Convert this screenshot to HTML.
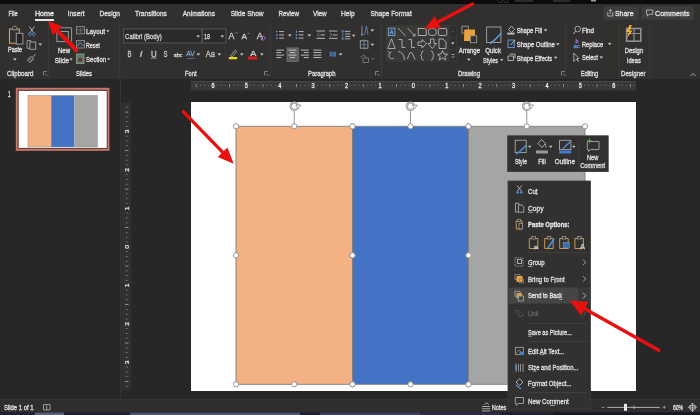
<!DOCTYPE html><html><head><meta charset="utf-8"><style>html,body{margin:0;padding:0;width:700px;height:415px;overflow:hidden;background:#262626}svg{display:block;will-change:transform}</style></head><body>
<svg width="700" height="415" viewBox="0 0 700 415" font-family="'Liberation Sans', sans-serif">
<rect x="0" y="0" width="700" height="415" fill="#272727" />
<rect x="0" y="0" width="700" height="79" fill="#31302e" />
<rect x="0" y="0" width="700" height="4" fill="#0b0b0b" />
<circle cx="500" cy="0.5" r="2.2" fill="none" stroke="#3a3a3a" stroke-width="0.8"/>
<circle cx="506" cy="0.5" r="2.2" fill="none" stroke="#3a3a3a" stroke-width="0.8"/>
<rect x="515" y="0" width="18" height="2" fill="#2a2a2a" />
<rect x="553" y="0" width="17" height="2" fill="#2a2a2a" />
<rect x="591" y="0" width="5" height="1.5" fill="#9a9a9a" />
<text x="8.60" y="16.00" font-size="7.97" fill="#e0e0e0" stroke="#e0e0e0" stroke-width="0.3" textLength="9.10" lengthAdjust="spacingAndGlyphs">File</text>
<text x="34.90" y="16.00" font-size="7.97" fill="#f0f0f0" stroke="#f0f0f0" stroke-width="0.3" textLength="19.00" lengthAdjust="spacingAndGlyphs">Home</text>
<text x="67.80" y="16.00" font-size="7.97" fill="#e0e0e0" stroke="#e0e0e0" stroke-width="0.3" textLength="16.70" lengthAdjust="spacingAndGlyphs">Insert</text>
<text x="99.40" y="16.00" font-size="7.97" fill="#e0e0e0" stroke="#e0e0e0" stroke-width="0.3" textLength="20.60" lengthAdjust="spacingAndGlyphs">Design</text>
<text x="134.90" y="16.00" font-size="7.97" fill="#e0e0e0" stroke="#e0e0e0" stroke-width="0.3" textLength="32.00" lengthAdjust="spacingAndGlyphs">Transitions</text>
<text x="182.70" y="16.00" font-size="7.97" fill="#e0e0e0" stroke="#e0e0e0" stroke-width="0.3" textLength="32.30" lengthAdjust="spacingAndGlyphs">Animations</text>
<text x="230.70" y="16.00" font-size="7.97" fill="#e0e0e0" stroke="#e0e0e0" stroke-width="0.3" textLength="32.90" lengthAdjust="spacingAndGlyphs">Slide Show</text>
<text x="278.40" y="16.00" font-size="7.97" fill="#e0e0e0" stroke="#e0e0e0" stroke-width="0.3" textLength="20.60" lengthAdjust="spacingAndGlyphs">Review</text>
<text x="313.00" y="16.00" font-size="7.97" fill="#e0e0e0" stroke="#e0e0e0" stroke-width="0.3" textLength="13.70" lengthAdjust="spacingAndGlyphs">View</text>
<text x="341.00" y="16.00" font-size="7.97" fill="#e0e0e0" stroke="#e0e0e0" stroke-width="0.3" textLength="13.80" lengthAdjust="spacingAndGlyphs">Help</text>
<text x="370.60" y="16.00" font-size="7.97" fill="#e0e0e0" stroke="#e0e0e0" stroke-width="0.3" textLength="41.10" lengthAdjust="spacingAndGlyphs">Shape Format</text>
<rect x="35" y="19" width="19" height="2" fill="#e6e6e6" />
<rect x="603.5" y="6.2" width="35.5" height="13.6" fill="#3e3d3b" rx="1"/>
<rect x="641.3" y="6.2" width="52.8" height="13.6" fill="#3e3d3b" rx="1"/>
<text x="615.00" y="16.00" font-size="7.97" fill="#e6e6e6" stroke="#e6e6e6" stroke-width="0.3" textLength="18.50" lengthAdjust="spacingAndGlyphs">Share</text>
<text x="655.00" y="16.00" font-size="7.97" fill="#e6e6e6" stroke="#e6e6e6" stroke-width="0.3" textLength="34.50" lengthAdjust="spacingAndGlyphs">Comments</text>
<rect x="48.3" y="24.3" width="0.9" height="52.7" fill="#3d3d3b" />
<rect x="119.2" y="24.3" width="0.9" height="52.7" fill="#3d3d3b" />
<rect x="269.8" y="24.3" width="0.9" height="52.7" fill="#3d3d3b" />
<rect x="381" y="24.3" width="0.9" height="52.7" fill="#3d3d3b" />
<rect x="565.5" y="24.3" width="0.9" height="52.7" fill="#3d3d3b" />
<rect x="618.8" y="24.3" width="0.9" height="52.7" fill="#3d3d3b" />
<rect x="649.2" y="24.3" width="0.9" height="52.7" fill="#3d3d3b" />
<text x="7.00" y="76.30" font-size="7.54" fill="#e0e0e0" stroke="#e0e0e0" stroke-width="0.3" textLength="26.50" lengthAdjust="spacingAndGlyphs">Clipboard</text>
<text x="76.00" y="76.30" font-size="7.54" fill="#e0e0e0" stroke="#e0e0e0" stroke-width="0.3" textLength="16.00" lengthAdjust="spacingAndGlyphs">Slides</text>
<text x="185.00" y="76.30" font-size="7.54" fill="#e0e0e0" stroke="#e0e0e0" stroke-width="0.3" textLength="11.50" lengthAdjust="spacingAndGlyphs">Font</text>
<text x="308.00" y="76.30" font-size="7.54" fill="#e0e0e0" stroke="#e0e0e0" stroke-width="0.3" textLength="27.50" lengthAdjust="spacingAndGlyphs">Paragraph</text>
<text x="458.00" y="76.30" font-size="7.54" fill="#e0e0e0" stroke="#e0e0e0" stroke-width="0.3" textLength="22.00" lengthAdjust="spacingAndGlyphs">Drawing</text>
<text x="581.00" y="76.30" font-size="7.54" fill="#e0e0e0" stroke="#e0e0e0" stroke-width="0.3" textLength="17.00" lengthAdjust="spacingAndGlyphs">Editing</text>
<text x="621.00" y="76.30" font-size="7.54" fill="#e0e0e0" stroke="#e0e0e0" stroke-width="0.3" textLength="24.50" lengthAdjust="spacingAndGlyphs">Designer</text>
<path d="M12.5,29 H9.5 V43.2 H16 M17.2,29 H19.3 V33" fill="none" stroke="#d6a45a" stroke-width="1.1" />
<path d="M12.6,29.8 V27.6 L14.85,25.8 L17.1,27.6 V29.8 Z" fill="#31302e" stroke="#a0a0a0" stroke-width="0.9" />
<rect x="16.3" y="33.3" width="6.6" height="10.8" fill="#262524" stroke="#9a9a9a" stroke-width="1"/>
<text x="8.00" y="52.30" font-size="6.96" fill="#e0e0e0" stroke="#e0e0e0" stroke-width="0.3" textLength="14.20" lengthAdjust="spacingAndGlyphs">Paste</text>
<path d="M13.60,58.70 L14.90,60.30 L16.20,58.70 Z" fill="#bdbdbd" stroke="#bdbdbd" stroke-width="0.7"/>
<path d="M29.3,26.5 L33.8,33 M34.3,26.5 L29.8,33" fill="none" stroke="#b4b4b4" stroke-width="0.9" />
<circle cx="29.8" cy="34.3" r="1.5" fill="none" stroke="#5b86b8" stroke-width="0.9"/>
<circle cx="33.8" cy="34.3" r="1.5" fill="none" stroke="#5b86b8" stroke-width="0.9"/>
<path d="M27,40.5 H30.8 V48.3 H27 Z" fill="none" stroke="#9a9a9a" stroke-width="0.9" />
<rect x="29.9" y="42" width="5.8" height="7.3" fill="#31302e" stroke="#a8a8a8" stroke-width="0.9"/>
<path d="M39.00,43.70 L40.30,45.30 L41.60,43.70 Z" fill="#bdbdbd" stroke="#bdbdbd" stroke-width="0.7"/>
<path d="M27.5,60 L31,56.5 L33.5,59 L30,62.5 Z M29.2,58.3 L31.7,60.8 M32.2,57.7 L35.5,54.2" fill="none" stroke="#a8a8a8" stroke-width="1" />
<path d="M60,27.8 H71.6 V41.6" fill="none" stroke="#9a9a9a" stroke-width="1" />
<rect x="56.9" y="31.5" width="11.4" height="10.1" fill="#31302e" stroke="#9a9a9a" stroke-width="1"/>
<text x="58.00" y="53.00" font-size="6.67" fill="#e0e0e0" stroke="#e0e0e0" stroke-width="0.3" textLength="12.00" lengthAdjust="spacingAndGlyphs">New</text>
<text x="54.80" y="62.80" font-size="7.68" fill="#e0e0e0" stroke="#e0e0e0" stroke-width="0.3" textLength="14.20" lengthAdjust="spacingAndGlyphs">Slide</text>
<path d="M70.00,58.70 L71.10,60.30 L72.20,58.70 Z" fill="#bdbdbd" stroke="#bdbdbd" stroke-width="0.7"/>
<rect x="76.5" y="26.6" width="8" height="7.2" fill="#3a3a3a" stroke="#8a8a8a" stroke-width="0.9"/>
<path d="M80.5,28 V33.5 M77,30 H84" fill="none" stroke="#6a6a6a" stroke-width="0.8" />
<text x="86.00" y="33.70" font-size="6.96" fill="#e0e0e0" stroke="#e0e0e0" stroke-width="0.3" textLength="19.10" lengthAdjust="spacingAndGlyphs">Layout</text>
<path d="M106.80,30.50 L107.90,32.10 L109.00,30.50 Z" fill="#bdbdbd" stroke="#bdbdbd" stroke-width="0.7"/>
<rect x="76.5" y="40.5" width="8" height="7.5" fill="#3a3a3a" stroke="#8a8a8a" stroke-width="0.9"/>
<path d="M77.5,46 L80,42.5 L83.5,46" fill="none" stroke="#5d8fc9" stroke-width="1" />
<text x="86.00" y="47.70" font-size="7.25" fill="#e0e0e0" stroke="#e0e0e0" stroke-width="0.3" textLength="13.80" lengthAdjust="spacingAndGlyphs">Reset</text>
<rect x="76.5" y="54" width="7.5" height="9.5" fill="#5f7a6a" stroke="#8a9a8a" stroke-width="0.9"/>
<rect x="78.5" y="58" width="3.5" height="3.5" fill="#7a2a2a" />
<text x="86.00" y="61.80" font-size="7.54" fill="#e0e0e0" stroke="#e0e0e0" stroke-width="0.3" textLength="20.20" lengthAdjust="spacingAndGlyphs">Section</text>
<path d="M107.50,58.50 L108.60,60.10 L109.70,58.50 Z" fill="#bdbdbd" stroke="#bdbdbd" stroke-width="0.7"/>
<rect x="123.4" y="28.9" width="78.6" height="14" fill="#2b2a28" stroke="#5a5a5a" stroke-width="0.9"/>
<rect x="202.5" y="28.9" width="23.4" height="14" fill="#2b2a28" stroke="#5a5a5a" stroke-width="0.9"/>
<text x="125.10" y="38.60" font-size="8.12" fill="#d8d8d8" stroke="#d8d8d8" stroke-width="0.3" textLength="36.60" lengthAdjust="spacingAndGlyphs">Calibri (Body)</text>
<path d="M196.80,35.70 L198.10,37.30 L199.40,35.70 Z" fill="#bdbdbd" stroke="#bdbdbd" stroke-width="0.7"/>
<text x="204.10" y="38.50" font-size="7.97" fill="#d8d8d8" stroke="#d8d8d8" stroke-width="0.3" textLength="6.00" lengthAdjust="spacingAndGlyphs">18</text>
<path d="M221.00,35.70 L222.30,37.30 L223.60,35.70 Z" fill="#bdbdbd" stroke="#bdbdbd" stroke-width="0.7"/>
<text x="228.60" y="38.50" font-size="8.70" fill="#c8c8c8" stroke="#c8c8c8" stroke-width="0.3" textLength="5.90" lengthAdjust="spacingAndGlyphs">A</text>
<path d="M235,33.5 L236.3,32.2 L237.6,33.5" fill="none" stroke="#aaa" stroke-width="0.7" />
<text x="241.60" y="38.50" font-size="6.96" fill="#c8c8c8" stroke="#c8c8c8" stroke-width="0.3" textLength="5.40" lengthAdjust="spacingAndGlyphs">A</text>
<path d="M247.6,33 L248.6,34 L249.6,33" fill="none" stroke="#aaa" stroke-width="0.7" />
<rect x="252.5" y="30" width="0.7" height="12" fill="#3a3a3a" />
<text x="256.80" y="39.00" font-size="9.42" fill="#c8c8c8" stroke="#c8c8c8" stroke-width="0.3" textLength="6.20" lengthAdjust="spacingAndGlyphs">A</text>
<path d="M260.5,38.5 L263,35.8 L265.5,38 L263,40.6 Z" fill="none" stroke="#a36ad0" stroke-width="1" />
<text x="127.40" y="56.60" font-size="8.41" fill="#c8c8c8" stroke="#c8c8c8" stroke-width="0.3" textLength="4.00" lengthAdjust="spacingAndGlyphs">B</text>
<text x="139.6" y="56.6" font-size="8.4" font-style="italic" fill="#c8c8c8" stroke="#c8c8c8" stroke-width="0.2" textLength="3" lengthAdjust="spacingAndGlyphs">I</text>
<text x="150.90" y="56.60" font-size="8.41" fill="#c8c8c8" stroke="#c8c8c8" stroke-width="0.3" textLength="5.70" lengthAdjust="spacingAndGlyphs">U</text>
<rect x="150.9" y="57.6" width="5.7" height="0.8" fill="#c0c0c0" />
<text x="163.40" y="56.60" font-size="8.41" fill="#c8c8c8" stroke="#c8c8c8" stroke-width="0.3" textLength="4.00" lengthAdjust="spacingAndGlyphs">S</text>
<text x="173.70" y="56.80" font-size="6.09" fill="#c8c8c8" stroke="#c8c8c8" stroke-width="0.3" textLength="8.60" lengthAdjust="spacingAndGlyphs">abc</text>
<rect x="173.7" y="54.3" width="8.6" height="0.8" fill="#c0c0c0" />
<text x="186.30" y="56.00" font-size="8.12" fill="#7aa2d0" stroke="#7aa2d0" stroke-width="0.3" textLength="8.60" lengthAdjust="spacingAndGlyphs">AV</text>
<path d="M187,58.5 H195" fill="none" stroke="#4a78b0" stroke-width="0.8" />
<path d="M197.00,53.70 L198.30,55.30 L199.60,53.70 Z" fill="#bdbdbd" stroke="#bdbdbd" stroke-width="0.7"/>
<text x="205.80" y="57.00" font-size="8.41" fill="#c8c8c8" stroke="#c8c8c8" stroke-width="0.3" textLength="9.20" lengthAdjust="spacingAndGlyphs">Aa</text>
<path d="M218.00,53.70 L219.30,55.30 L220.60,53.70 Z" fill="#bdbdbd" stroke="#bdbdbd" stroke-width="0.7"/>
<rect x="225.3" y="48" width="0.7" height="12" fill="#3a3a3a" />
<path d="M230.5,55.8 L235.3,50 L236.8,51.4 L232,57 Z" fill="none" stroke="#b0b0b0" stroke-width="0.8" />
<rect x="228.6" y="57" width="8.7" height="2.3" fill="#e6e01a" rx="1"/>
<path d="M240.50,53.70 L241.80,55.30 L243.10,53.70 Z" fill="#bdbdbd" stroke="#bdbdbd" stroke-width="0.7"/>
<text x="250.20" y="55.60" font-size="7.83" fill="#c8c8c8" stroke="#c8c8c8" stroke-width="0.3" textLength="6.10" lengthAdjust="spacingAndGlyphs">A</text>
<rect x="247.6" y="56.4" width="9.7" height="3.2" fill="#d71f22" rx="1.4"/>
<path d="M260.60,53.70 L261.90,55.30 L263.20,53.70 Z" fill="#bdbdbd" stroke="#bdbdbd" stroke-width="0.7"/>
<circle cx="276.9" cy="31.6" r="0.9" fill="#5b8fd0"/>
<rect x="279.09999999999997" y="31.150000000000002" width="5" height="0.9" fill="#c0c0c0" />
<circle cx="276.9" cy="34.9" r="0.9" fill="#5b8fd0"/>
<rect x="279.09999999999997" y="34.449999999999996" width="5" height="0.9" fill="#c0c0c0" />
<circle cx="276.9" cy="38.1" r="0.9" fill="#5b8fd0"/>
<rect x="279.09999999999997" y="37.65" width="5" height="0.9" fill="#c0c0c0" />
<rect x="295.79999999999995" y="30.6" width="1.2" height="2" fill="#5b8fd0" />
<rect x="298.59999999999997" y="31.150000000000002" width="5" height="0.9" fill="#c0c0c0" />
<rect x="295.79999999999995" y="33.9" width="1.2" height="2" fill="#5b8fd0" />
<rect x="298.59999999999997" y="34.449999999999996" width="5" height="0.9" fill="#c0c0c0" />
<rect x="295.79999999999995" y="37.1" width="1.2" height="2" fill="#5b8fd0" />
<rect x="298.59999999999997" y="37.65" width="5" height="0.9" fill="#c0c0c0" />
<path d="M288.50,34.70 L289.80,36.30 L291.10,34.70 Z" fill="#bdbdbd" stroke="#bdbdbd" stroke-width="0.7"/>
<path d="M308.00,34.70 L309.30,36.30 L310.60,34.70 Z" fill="#bdbdbd" stroke="#bdbdbd" stroke-width="0.7"/>
<rect x="316.5" y="30.55" width="8.5" height="0.9" fill="#c0c0c0" />
<rect x="316.5" y="37.849999999999994" width="8.5" height="0.9" fill="#c0c0c0" />
<rect x="320.5" y="34.5" width="4.5" height="0.9" fill="#c0c0c0" />
<path d="M319.3,33.2 L317.5,34.9 L319.3,36.6" fill="none" stroke="#a0a0a0" stroke-width="0.8" />
<rect x="329" y="30.55" width="8.5" height="0.9" fill="#c0c0c0" />
<rect x="329" y="37.849999999999994" width="8.5" height="0.9" fill="#c0c0c0" />
<rect x="333" y="34.5" width="4.5" height="0.9" fill="#c0c0c0" />
<path d="M330,33.2 L331.8,34.9 L330,36.6" fill="none" stroke="#a0a0a0" stroke-width="0.8" />
<path d="M342.8,30.5 V39.5 M341.3,32 L342.8,30.3 L344.3,32 M341.3,38 L342.8,39.7 L344.3,38" fill="none" stroke="#5b8fd0" stroke-width="0.8" />
<rect x="345" y="30.85" width="5.3" height="0.9" fill="#c0c0c0" />
<rect x="345" y="33.55" width="5.3" height="0.9" fill="#c0c0c0" />
<rect x="345" y="36.05" width="5.3" height="0.9" fill="#c0c0c0" />
<rect x="345" y="38.349999999999994" width="5.3" height="0.9" fill="#c0c0c0" />
<path d="M352.40,35.00 L353.70,36.60 L355.00,35.00 Z" fill="#bdbdbd" stroke="#bdbdbd" stroke-width="0.7"/>
<rect x="287" y="47.9" width="11.3" height="13.6" fill="#5c5c5c" stroke="#7a7a7a" stroke-width="0.7"/>
<rect x="276.3" y="49.65" width="7.7" height="0.9" fill="#c8c8c8" />
<rect x="276.3" y="52.15" width="5" height="0.9" fill="#c8c8c8" />
<rect x="276.3" y="54.65" width="7.7" height="0.9" fill="#c8c8c8" />
<rect x="276.3" y="57.15" width="5" height="0.9" fill="#c8c8c8" />
<rect x="288.5" y="49.65" width="8" height="0.9" fill="#c8c8c8" />
<rect x="290.0" y="52.15" width="5" height="0.9" fill="#c8c8c8" />
<rect x="288.5" y="54.65" width="8" height="0.9" fill="#c8c8c8" />
<rect x="290.0" y="57.15" width="5" height="0.9" fill="#c8c8c8" />
<rect x="300.8" y="49.65" width="8" height="0.9" fill="#c8c8c8" />
<rect x="303.8" y="52.15" width="5" height="0.9" fill="#c8c8c8" />
<rect x="300.8" y="54.65" width="8" height="0.9" fill="#c8c8c8" />
<rect x="303.8" y="57.15" width="5" height="0.9" fill="#c8c8c8" />
<rect x="313.3" y="49.65" width="8" height="0.9" fill="#c8c8c8" />
<rect x="313.3" y="52.15" width="8" height="0.9" fill="#c8c8c8" />
<rect x="313.3" y="54.65" width="8" height="0.9" fill="#c8c8c8" />
<rect x="313.3" y="57.15" width="8" height="0.9" fill="#c8c8c8" />
<rect x="325.2" y="48" width="0.7" height="12" fill="#3a3a3a" />
<rect x="329.5" y="51.7" width="3" height="4.9" fill="#3f6ea8" />
<rect x="333" y="51.7" width="3" height="4.9" fill="#3f6ea8" />
<path d="M339.30,53.70 L340.60,55.30 L341.90,53.70 Z" fill="#bdbdbd" stroke="#bdbdbd" stroke-width="0.7"/>
<path d="M362,25.7 V35.2 M360.8,34 L362,35.4 L363.2,34" fill="none" stroke="#9aa6b2" stroke-width="0.8" />
<path d="M364.5,35 L366.5,26 L368,35" fill="none" stroke="#5b8fd0" stroke-width="0.8" />
<path d="M371.00,29.70 L372.30,31.30 L373.60,29.70 Z" fill="#bdbdbd" stroke="#bdbdbd" stroke-width="0.7"/>
<rect x="360.3" y="40.8" width="7.6" height="7.4" fill="none" stroke="#9aa6b2" stroke-width="0.9"/>
<path d="M364.1,39.5 V49.5 M362,44.5 H366.2" fill="none" stroke="#6a8fb8" stroke-width="0.8" />
<path d="M371.00,44.00 L372.30,45.60 L373.60,44.00 Z" fill="#bdbdbd" stroke="#bdbdbd" stroke-width="0.7"/>
<path d="M360.5,57 L364,55 L366,57 M363,58 H368.5 V62.5 H363 Z" fill="none" stroke="#7a7a7a" stroke-width="0.9" />
<path d="M371.50,58.30 L372.80,59.90 L374.10,58.30 Z" fill="#5a5a5a" stroke="#5a5a5a" stroke-width="0.7"/>
<path d="M43.5,71.5 H47.0 M43.5,71.5 V75.5 M45.0,73.5 L47.5,76" fill="none" stroke="#a0a0a0" stroke-width="0.7" />
<path d="M264.5,71.5 H268.0 M264.5,71.5 V75.5 M266.0,73.5 L268.5,76" fill="none" stroke="#a0a0a0" stroke-width="0.7" />
<path d="M375.5,71.5 H379.0 M375.5,71.5 V75.5 M377.0,73.5 L379.5,76" fill="none" stroke="#a0a0a0" stroke-width="0.7" />
<path d="M561.5,71.5 H565.0 M561.5,71.5 V75.5 M563.0,73.5 L565.5,76" fill="none" stroke="#a0a0a0" stroke-width="0.7" />
<rect x="385.9" y="25.3" width="63" height="36.3" fill="#3a3937" />
<rect x="449.2" y="25.3" width="7.5" height="11.8" fill="#2f2f2f" stroke="#3f3f3f" stroke-width="0.6"/>
<rect x="449.2" y="37.3" width="7.5" height="11.8" fill="#2f2f2f" stroke="#3f3f3f" stroke-width="0.6"/>
<rect x="449.2" y="49.3" width="7.5" height="12.2" fill="#2f2f2f" stroke="#3f3f3f" stroke-width="0.6"/>
<rect x="452" y="31" width="1.5" height="0.8" fill="#6a6a6a" />
<path d="M451.60,42.70 L452.80,44.30 L454.00,42.70 Z" fill="#bdbdbd" stroke="#bdbdbd" stroke-width="0.7"/>
<path d="M451.5,54.5 H454.5 M451.5,56.3 L453,57.8 L454.5,56.3" fill="none" stroke="#bbb" stroke-width="0.8" />
<rect x="388.3" y="28.2" width="6.6" height="7.4" fill="#34404c" stroke="#7aa6d6" stroke-width="0.9"/>
<text x="389.80" y="34.20" font-size="5.22" fill="#7aa6d6" stroke="#7aa6d6" stroke-width="0.3" textLength="3.60" lengthAdjust="spacingAndGlyphs">A</text>
<path d="M398,28 L405.5,36" fill="none" stroke="#b4b4b4" stroke-width="0.9" />
<path d="M407.5,28 L415,36 M415,33.5 V36 H412.5" fill="none" stroke="#b4b4b4" stroke-width="0.9" />
<rect x="418.2" y="28.5" width="8" height="7" fill="none" stroke="#b4b4b4" stroke-width="0.9"/>
<rect x="428.3" y="28.5" width="8" height="7" fill="none" stroke="#b4b4b4" stroke-width="0.9" rx="3"/>
<rect x="438.3" y="28.5" width="8.5" height="7" fill="none" stroke="#b4b4b4" stroke-width="0.9" rx="1.5"/>
<path d="M391.5,38.8 L387.8,48.5 H395.2 Z" fill="none" stroke="#b4b4b4" stroke-width="0.9" />
<path d="M398.5,39.5 H402 V47.5 H405.5" fill="none" stroke="#b4b4b4" stroke-width="0.9" />
<path d="M408.5,39.5 H411.5 V47.5 H415" fill="none" stroke="#b4b4b4" stroke-width="0.9" />
<path d="M418,42 H422 V39.5 L426.5,43.7 L422,48 V45.5 H418 Z" fill="none" stroke="#b4b4b4" stroke-width="0.9" />
<path d="M430.5,39 H434 V43.5 H436.5 L432.3,48.5 L428,43.5 H430.5 Z" fill="none" stroke="#b4b4b4" stroke-width="0.9" />
<path d="M439,39 H443 L446,42 V48.5 H439 Z" fill="none" stroke="#b4b4b4" stroke-width="0.9" />
<path d="M388,51 C390,55 393,50 390,53 C387,57 391,60 394,58" fill="none" stroke="#b4b4b4" stroke-width="0.9" />
<path d="M398,51.5 Q404,52 404.5,60" fill="none" stroke="#b4b4b4" stroke-width="0.9" />
<path d="M407.5,59 Q410,50 412,53 Q413.5,56 415,59.5" fill="none" stroke="#b4b4b4" stroke-width="0.9" />
<path d="M423.5,51 Q421.5,51 421.5,53.5 V54.7 L420.5,55.5 L421.5,56.3 V58 Q421.5,60 423.5,60" fill="none" stroke="#b4b4b4" stroke-width="0.9" />
<path d="M431,51 Q433,51 433,53.5 V54.7 L434,55.5 L433,56.3 V58 Q433,60 431,60" fill="none" stroke="#b4b4b4" stroke-width="0.9" />
<path d="M442.5,50.5 L444,54 L447.5,54.3 L444.8,56.6 L445.8,60 L442.5,58 L439.2,60 L440.2,56.6 L437.5,54.3 L441,54 Z" fill="none" stroke="#b4b4b4" stroke-width="0.9" />
<rect x="461.9" y="26.2" width="6.4" height="6.9" fill="none" stroke="#9a9a9a" stroke-width="0.9"/>
<path d="M464.3,29.5 H475 V36 H470.4 V41.1 H464 Z" fill="#eba23a" stroke="none" stroke-width="0.9" />
<rect x="470.4" y="35.8" width="6.3" height="6.9" fill="#31302e" stroke="#9a9a9a" stroke-width="0.9"/>
<text x="458.70" y="53.30" font-size="6.96" fill="#e0e0e0" stroke="#e0e0e0" stroke-width="0.3" textLength="21.30" lengthAdjust="spacingAndGlyphs">Arrange</text>
<path d="M467.50,58.90 L468.80,60.50 L470.10,58.90 Z" fill="#bdbdbd" stroke="#bdbdbd" stroke-width="0.7"/>
<rect x="486.6" y="27" width="14.3" height="15.5" fill="none" stroke="#9a9a9a" stroke-width="1"/>
<path d="M501.5,33 L492.5,42" fill="none" stroke="#5b9ee0" stroke-width="1.6" />
<path d="M490,43.5 L492.5,41.5" fill="none" stroke="#5b9ee0" stroke-width="2" />
<text x="485.20" y="52.80" font-size="6.96" fill="#e0e0e0" stroke="#e0e0e0" stroke-width="0.3" textLength="15.90" lengthAdjust="spacingAndGlyphs">Quick</text>
<text x="483.10" y="62.80" font-size="7.97" fill="#e0e0e0" stroke="#e0e0e0" stroke-width="0.3" textLength="14.90" lengthAdjust="spacingAndGlyphs">Styles</text>
<path d="M500.60,59.30 L501.70,60.90 L502.80,59.30 Z" fill="#bdbdbd" stroke="#bdbdbd" stroke-width="0.7"/>
<path d="M508.5,29.5 L511.5,26 L514.5,29.5 L511.5,32.5 Z" fill="none" stroke="#b8b8b8" stroke-width="0.9" />
<rect x="507.2" y="32.6" width="7.4" height="2" fill="#b8b8b8" />
<text x="516.70" y="33.10" font-size="7.54" fill="#e0e0e0" stroke="#e0e0e0" stroke-width="0.3" textLength="25.50" lengthAdjust="spacingAndGlyphs">Shape Fill</text>
<path d="M544.30,29.60 L545.60,31.20 L546.90,29.60 Z" fill="#bdbdbd" stroke="#bdbdbd" stroke-width="0.7"/>
<rect x="508" y="40" width="6.2" height="7.5" fill="none" stroke="#5b8fd0" stroke-width="1.1"/>
<path d="M510.5,45 L515,40" fill="none" stroke="#b8b8b8" stroke-width="1" />
<text x="516.70" y="46.90" font-size="7.54" fill="#e0e0e0" stroke="#e0e0e0" stroke-width="0.3" textLength="38.20" lengthAdjust="spacingAndGlyphs">Shape Outline</text>
<path d="M556.50,43.60 L557.80,45.20 L559.10,43.60 Z" fill="#bdbdbd" stroke="#bdbdbd" stroke-width="0.7"/>
<path d="M508,56 H513.5 V60.5 H508 Z M509.5,54 H515 V58.5" fill="none" stroke="#b8b8b8" stroke-width="0.9" />
<text x="516.70" y="60.70" font-size="7.54" fill="#e0e0e0" stroke="#e0e0e0" stroke-width="0.3" textLength="35.50" lengthAdjust="spacingAndGlyphs">Shape Effects</text>
<path d="M554.40,57.00 L555.70,58.60 L557.00,57.00 Z" fill="#bdbdbd" stroke="#bdbdbd" stroke-width="0.7"/>
<circle cx="577.7" cy="29" r="2.8" fill="none" stroke="#b0b0b0" stroke-width="0.9"/>
<path d="M575.7,31 L573.4,34" fill="none" stroke="#b0b0b0" stroke-width="1" />
<text x="581.90" y="33.10" font-size="7.54" fill="#e0e0e0" stroke="#e0e0e0" stroke-width="0.3" textLength="12.20" lengthAdjust="spacingAndGlyphs">Find</text>
<text x="575.50" y="42.50" font-size="6.23" fill="#a87ad0" stroke="#a87ad0" stroke-width="0.3" textLength="3.00" lengthAdjust="spacingAndGlyphs">b</text>
<text x="573.40" y="47.80" font-size="4.78" fill="#5b8fd0" stroke="#5b8fd0" stroke-width="0.3" textLength="6.60" lengthAdjust="spacingAndGlyphs">ac</text>
<text x="581.90" y="46.90" font-size="6.96" fill="#e0e0e0" stroke="#e0e0e0" stroke-width="0.3" textLength="21.20" lengthAdjust="spacingAndGlyphs">Replace</text>
<path d="M608.40,43.30 L609.70,44.90 L611.00,43.30 Z" fill="#bdbdbd" stroke="#bdbdbd" stroke-width="0.7"/>
<path d="M573.8,53 V61.5 L576,59.3 L578.5,61.5 L577,58.5 H579 Z" fill="none" stroke="#b0b0b0" stroke-width="0.9" />
<text x="581.90" y="60.20" font-size="6.96" fill="#e0e0e0" stroke="#e0e0e0" stroke-width="0.3" textLength="15.90" lengthAdjust="spacingAndGlyphs">Select</text>
<path d="M599.90,56.70 L601.20,58.30 L602.50,56.70 Z" fill="#bdbdbd" stroke="#bdbdbd" stroke-width="0.7"/>
<rect x="626.6" y="28.5" width="14.2" height="12.7" fill="none" stroke="#8f8f8f" stroke-width="1.6"/>
<path d="M634,29 V41 M626.6,33.5 H640.8" fill="none" stroke="#8f8f8f" stroke-width="1.2" />
<path d="M629.5,25 L626.2,32 H629 L626.8,38.5 L632.5,30.5 H629.8 L631.8,25 Z" fill="#f0b030" stroke="none" stroke-width="0.9" />
<text x="624.70" y="53.20" font-size="7.25" fill="#e0e0e0" stroke="#e0e0e0" stroke-width="0.3" textLength="18.50" lengthAdjust="spacingAndGlyphs">Design</text>
<text x="626.80" y="62.60" font-size="7.97" fill="#e0e0e0" stroke="#e0e0e0" stroke-width="0.3" textLength="14.10" lengthAdjust="spacingAndGlyphs">Ideas</text>
<path d="M690.5,76 L693,73.5 L695.5,76" fill="none" stroke="#b0b0b0" stroke-width="0.9" />
<path d="M607.8,12 V16 H612.8 V12 M610.3,13.8 V9.5 M608.8,11 L610.3,9.4 L611.8,11" fill="none" stroke="#c8c8c8" stroke-width="0.8" />
<path d="M646.5,10 H652.8 V14.3 H649.3 L647.5,16 V14.3 H646.5 Z" fill="none" stroke="#c8c8c8" stroke-width="0.8" />
<rect x="120" y="79" width="1" height="321" fill="#343434" />
<rect x="191" y="81" width="445" height="9.5" fill="#383838" />
<rect x="121.5" y="102.5" width="9.5" height="288" fill="#303030" />
<rect x="191" y="102" width="445" height="289" fill="#ffffff" />
<text x="8.00" y="96.50" font-size="8.70" fill="#e0e0e0" stroke="#e0e0e0" stroke-width="0.3" textLength="2.50" lengthAdjust="spacingAndGlyphs">1</text>
<rect x="15.8" y="87.8" width="93.6" height="63" fill="#c8786a" />
<rect x="17.6" y="89.7" width="90" height="59.2" fill="#5a3a34" />
<rect x="18.7" y="90.9" width="88" height="57" fill="#ffffff" />
<rect x="28" y="95.4" width="23.2" height="51.6" fill="#f4b183" />
<rect x="51.2" y="95.4" width="23.2" height="51.6" fill="#4472c4" />
<rect x="74.4" y="95.4" width="23" height="51.6" fill="#a5a5a5" />
<rect x="28" y="95.4" width="69.4" height="51.6" fill="none" stroke="#8a8f99" stroke-width="0.5"/>
<rect x="236" y="126.3" width="116.5" height="258" fill="#f4b183" />
<rect x="352.5" y="126.3" width="116" height="258" fill="#4472c4" />
<rect x="468.5" y="126.3" width="116.5" height="258" fill="#a5a5a5" />
<rect x="236" y="126.3" width="116.5" height="258" fill="none" stroke="#7f7f7f" stroke-width="0.9"/>
<rect x="352.5" y="126.3" width="116.0" height="258" fill="none" stroke="#7f7f7f" stroke-width="0.9"/>
<rect x="468.5" y="126.3" width="116.5" height="258" fill="none" stroke="#7f7f7f" stroke-width="0.9"/>
<line x1="294.25" y1="126.3" x2="294.25" y2="110.5" stroke="#8a8a8a" stroke-width="0.9"/>
<path d="M297.73,105.03 A3.7,3.7 0 1 0 297.60,107.86" fill="none" stroke="#8f8f8f" stroke-width="2.2"/>
<path d="M297.73,105.03 A3.7,3.7 0 1 0 297.60,107.86" fill="none" stroke="#f4f4f4" stroke-width="0.7"/>
<path d="M295.85,105.10 L301.05,105.10 L298.45,108.50 Z" fill="#f4f4f4" stroke="#8f8f8f" stroke-width="0.8"/>
<circle cx="236" cy="126.3" r="2.6" fill="#ffffff" stroke="#8c8c8c" stroke-width="0.9"/>
<circle cx="294.25" cy="126.3" r="2.6" fill="#ffffff" stroke="#8c8c8c" stroke-width="0.9"/>
<circle cx="352.5" cy="126.3" r="2.6" fill="#ffffff" stroke="#8c8c8c" stroke-width="0.9"/>
<circle cx="236" cy="255.3" r="2.6" fill="#ffffff" stroke="#8c8c8c" stroke-width="0.9"/>
<circle cx="352.5" cy="255.3" r="2.6" fill="#ffffff" stroke="#8c8c8c" stroke-width="0.9"/>
<circle cx="236" cy="384.3" r="2.6" fill="#ffffff" stroke="#8c8c8c" stroke-width="0.9"/>
<circle cx="294.25" cy="384.3" r="2.6" fill="#ffffff" stroke="#8c8c8c" stroke-width="0.9"/>
<circle cx="352.5" cy="384.3" r="2.6" fill="#ffffff" stroke="#8c8c8c" stroke-width="0.9"/>
<line x1="410.5" y1="126.3" x2="410.5" y2="110.5" stroke="#8a8a8a" stroke-width="0.9"/>
<path d="M413.98,105.03 A3.7,3.7 0 1 0 413.85,107.86" fill="none" stroke="#8f8f8f" stroke-width="2.2"/>
<path d="M413.98,105.03 A3.7,3.7 0 1 0 413.85,107.86" fill="none" stroke="#f4f4f4" stroke-width="0.7"/>
<path d="M412.10,105.10 L417.30,105.10 L414.70,108.50 Z" fill="#f4f4f4" stroke="#8f8f8f" stroke-width="0.8"/>
<circle cx="352.5" cy="126.3" r="2.6" fill="#ffffff" stroke="#8c8c8c" stroke-width="0.9"/>
<circle cx="410.5" cy="126.3" r="2.6" fill="#ffffff" stroke="#8c8c8c" stroke-width="0.9"/>
<circle cx="468.5" cy="126.3" r="2.6" fill="#ffffff" stroke="#8c8c8c" stroke-width="0.9"/>
<circle cx="352.5" cy="255.3" r="2.6" fill="#ffffff" stroke="#8c8c8c" stroke-width="0.9"/>
<circle cx="468.5" cy="255.3" r="2.6" fill="#ffffff" stroke="#8c8c8c" stroke-width="0.9"/>
<circle cx="352.5" cy="384.3" r="2.6" fill="#ffffff" stroke="#8c8c8c" stroke-width="0.9"/>
<circle cx="410.5" cy="384.3" r="2.6" fill="#ffffff" stroke="#8c8c8c" stroke-width="0.9"/>
<circle cx="468.5" cy="384.3" r="2.6" fill="#ffffff" stroke="#8c8c8c" stroke-width="0.9"/>
<line x1="526.75" y1="126.3" x2="526.75" y2="110.5" stroke="#8a8a8a" stroke-width="0.9"/>
<path d="M530.23,105.03 A3.7,3.7 0 1 0 530.10,107.86" fill="none" stroke="#8f8f8f" stroke-width="2.2"/>
<path d="M530.23,105.03 A3.7,3.7 0 1 0 530.10,107.86" fill="none" stroke="#f4f4f4" stroke-width="0.7"/>
<path d="M528.35,105.10 L533.55,105.10 L530.95,108.50 Z" fill="#f4f4f4" stroke="#8f8f8f" stroke-width="0.8"/>
<circle cx="468.5" cy="126.3" r="2.6" fill="#ffffff" stroke="#8c8c8c" stroke-width="0.9"/>
<circle cx="526.75" cy="126.3" r="2.6" fill="#ffffff" stroke="#8c8c8c" stroke-width="0.9"/>
<circle cx="585" cy="126.3" r="2.6" fill="#ffffff" stroke="#8c8c8c" stroke-width="0.9"/>
<circle cx="468.5" cy="255.3" r="2.6" fill="#ffffff" stroke="#8c8c8c" stroke-width="0.9"/>
<circle cx="585" cy="255.3" r="2.6" fill="#ffffff" stroke="#8c8c8c" stroke-width="0.9"/>
<circle cx="468.5" cy="384.3" r="2.6" fill="#ffffff" stroke="#8c8c8c" stroke-width="0.9"/>
<circle cx="526.75" cy="384.3" r="2.6" fill="#ffffff" stroke="#8c8c8c" stroke-width="0.9"/>
<circle cx="585" cy="384.3" r="2.6" fill="#ffffff" stroke="#8c8c8c" stroke-width="0.9"/>
<rect x="0" y="399" width="700" height="1" fill="#353535" />
<rect x="0" y="400" width="700" height="12.6" fill="#2f2e2c" />
<rect x="0" y="412.6" width="700" height="2.4" fill="#1c2030" />
<rect x="35" y="412.6" width="29" height="2.4" fill="#58627a" />
<rect x="130" y="412.6" width="170" height="2.4" fill="#4a5570" />
<rect x="320" y="412.6" width="100" height="2.4" fill="#3a3d66" />
<rect x="420" y="412.6" width="80" height="2.4" fill="#2e2a48" />
<rect x="555" y="412.6" width="145" height="2.4" fill="#161820" />
<text x="4.00" y="410.30" font-size="7.25" fill="#e0e0e0" stroke="#e0e0e0" stroke-width="0.3" textLength="29.50" lengthAdjust="spacingAndGlyphs">Slide 1 of 1</text>
<path d="M43.5,404.5 H50 V410 H43.5 Z M46.7,404.5 V410" fill="none" stroke="#b0b0b0" stroke-width="0.8" />
<path d="M484.5,404.5 L486.7,402.8 L488.9,404.5" fill="none" stroke="#c0c0c0" stroke-width="0.8" />
<rect x="482" y="406.20000000000005" width="8.1" height="0.8" fill="#c8c8c8" />
<rect x="482" y="408.40000000000003" width="8.1" height="0.8" fill="#c8c8c8" />
<rect x="482" y="410.6" width="8.1" height="0.8" fill="#c8c8c8" />
<text x="491.80" y="410.40" font-size="7.25" fill="#e0e0e0" stroke="#e0e0e0" stroke-width="0.3" textLength="14.60" lengthAdjust="spacingAndGlyphs">Notes</text>
<rect x="601.5" y="407" width="3" height="0.8" fill="#9a9a9a" />
<rect x="607.4" y="406.9" width="52.4" height="0.9" fill="#bdbdbd" />
<rect x="624" y="403.8" width="3" height="7" fill="#e6e6e6" />
<rect x="633.7" y="405.5" width="0.8" height="3.5" fill="#bdbdbd" />
<path d="M662.5,407.3 H666 M664.25,405.5 V409" fill="none" stroke="#9a9a9a" stroke-width="0.8" />
<text x="673.00" y="410.30" font-size="6.96" fill="#e0e0e0" stroke="#e0e0e0" stroke-width="0.3" textLength="10.00" lengthAdjust="spacingAndGlyphs">60%</text>
<path d="M692.5,403 V411.5 M688.5,407.2 H696.5 M691,404.5 L692.5,403 L694,404.5 M691,410 L692.5,411.5 L694,410 M690,405.7 L688.5,407.2 L690,408.7 M695,405.7 L696.5,407.2 L695,408.7" fill="none" stroke="#c0c0c0" stroke-width="0.8" />
<rect x="690" y="405.5" width="5" height="3.5" fill="none" stroke="#c0c0c0" stroke-width="0.8"/>
<rect x="191" y="81" width="445" height="0.8" fill="#4a4a4a" />
<rect x="191.62500000000003" y="85.2" width="0.8" height="0.8" fill="#8a8a8a" />
<rect x="195.8" y="84" width="0.8" height="3.2" fill="#9a9a9a" />
<rect x="199.97500000000002" y="85.2" width="0.8" height="0.8" fill="#8a8a8a" />
<rect x="204.15" y="85.2" width="0.8" height="0.8" fill="#8a8a8a" />
<rect x="208.32500000000002" y="85.2" width="0.8" height="0.8" fill="#8a8a8a" />
<text x="211.40" y="88.20" font-size="6.67" fill="#e8e8e8" stroke="#e8e8e8" stroke-width="0.3" textLength="3.10" lengthAdjust="spacingAndGlyphs">6</text>
<rect x="216.675" y="85.2" width="0.8" height="0.8" fill="#8a8a8a" />
<rect x="220.85000000000002" y="85.2" width="0.8" height="0.8" fill="#8a8a8a" />
<rect x="225.025" y="85.2" width="0.8" height="0.8" fill="#8a8a8a" />
<rect x="229.20000000000002" y="84" width="0.8" height="3.2" fill="#9a9a9a" />
<rect x="233.375" y="85.2" width="0.8" height="0.8" fill="#8a8a8a" />
<rect x="237.55" y="85.2" width="0.8" height="0.8" fill="#8a8a8a" />
<rect x="241.72500000000002" y="85.2" width="0.8" height="0.8" fill="#8a8a8a" />
<text x="244.80" y="88.20" font-size="6.67" fill="#e8e8e8" stroke="#e8e8e8" stroke-width="0.3" textLength="3.10" lengthAdjust="spacingAndGlyphs">5</text>
<rect x="250.07500000000002" y="85.2" width="0.8" height="0.8" fill="#8a8a8a" />
<rect x="254.25" y="85.2" width="0.8" height="0.8" fill="#8a8a8a" />
<rect x="258.42500000000007" y="85.2" width="0.8" height="0.8" fill="#8a8a8a" />
<rect x="262.6" y="84" width="0.8" height="3.2" fill="#9a9a9a" />
<rect x="266.77500000000003" y="85.2" width="0.8" height="0.8" fill="#8a8a8a" />
<rect x="270.95000000000005" y="85.2" width="0.8" height="0.8" fill="#8a8a8a" />
<rect x="275.125" y="85.2" width="0.8" height="0.8" fill="#8a8a8a" />
<text x="278.20" y="88.20" font-size="6.67" fill="#e8e8e8" stroke="#e8e8e8" stroke-width="0.3" textLength="3.10" lengthAdjust="spacingAndGlyphs">4</text>
<rect x="283.475" y="85.2" width="0.8" height="0.8" fill="#8a8a8a" />
<rect x="287.65000000000003" y="85.2" width="0.8" height="0.8" fill="#8a8a8a" />
<rect x="291.82500000000005" y="85.2" width="0.8" height="0.8" fill="#8a8a8a" />
<rect x="296.00000000000006" y="84" width="0.8" height="3.2" fill="#9a9a9a" />
<rect x="300.17500000000007" y="85.2" width="0.8" height="0.8" fill="#8a8a8a" />
<rect x="304.35" y="85.2" width="0.8" height="0.8" fill="#8a8a8a" />
<rect x="308.52500000000003" y="85.2" width="0.8" height="0.8" fill="#8a8a8a" />
<text x="311.60" y="88.20" font-size="6.67" fill="#e8e8e8" stroke="#e8e8e8" stroke-width="0.3" textLength="3.10" lengthAdjust="spacingAndGlyphs">3</text>
<rect x="316.87500000000006" y="85.2" width="0.8" height="0.8" fill="#8a8a8a" />
<rect x="321.05000000000007" y="85.2" width="0.8" height="0.8" fill="#8a8a8a" />
<rect x="325.225" y="85.2" width="0.8" height="0.8" fill="#8a8a8a" />
<rect x="329.40000000000003" y="84" width="0.8" height="3.2" fill="#9a9a9a" />
<rect x="333.57500000000005" y="85.2" width="0.8" height="0.8" fill="#8a8a8a" />
<rect x="337.75000000000006" y="85.2" width="0.8" height="0.8" fill="#8a8a8a" />
<rect x="341.92500000000007" y="85.2" width="0.8" height="0.8" fill="#8a8a8a" />
<text x="345.00" y="88.20" font-size="6.67" fill="#e8e8e8" stroke="#e8e8e8" stroke-width="0.3" textLength="3.10" lengthAdjust="spacingAndGlyphs">2</text>
<rect x="350.27500000000003" y="85.2" width="0.8" height="0.8" fill="#8a8a8a" />
<rect x="354.45000000000005" y="85.2" width="0.8" height="0.8" fill="#8a8a8a" />
<rect x="358.62500000000006" y="85.2" width="0.8" height="0.8" fill="#8a8a8a" />
<rect x="362.80000000000007" y="84" width="0.8" height="3.2" fill="#9a9a9a" />
<rect x="366.975" y="85.2" width="0.8" height="0.8" fill="#8a8a8a" />
<rect x="371.15000000000003" y="85.2" width="0.8" height="0.8" fill="#8a8a8a" />
<rect x="375.32500000000005" y="85.2" width="0.8" height="0.8" fill="#8a8a8a" />
<text x="378.40" y="88.20" font-size="6.67" fill="#e8e8e8" stroke="#e8e8e8" stroke-width="0.3" textLength="3.10" lengthAdjust="spacingAndGlyphs">1</text>
<rect x="383.675" y="85.2" width="0.8" height="0.8" fill="#8a8a8a" />
<rect x="387.85" y="85.2" width="0.8" height="0.8" fill="#8a8a8a" />
<rect x="392.02500000000003" y="85.2" width="0.8" height="0.8" fill="#8a8a8a" />
<rect x="396.20000000000005" y="84" width="0.8" height="3.2" fill="#9a9a9a" />
<rect x="400.37500000000006" y="85.2" width="0.8" height="0.8" fill="#8a8a8a" />
<rect x="404.55" y="85.2" width="0.8" height="0.8" fill="#8a8a8a" />
<rect x="408.725" y="85.2" width="0.8" height="0.8" fill="#8a8a8a" />
<text x="411.80" y="88.20" font-size="6.67" fill="#e8e8e8" stroke="#e8e8e8" stroke-width="0.3" textLength="3.10" lengthAdjust="spacingAndGlyphs">0</text>
<rect x="417.07500000000005" y="85.2" width="0.8" height="0.8" fill="#8a8a8a" />
<rect x="421.25000000000006" y="85.2" width="0.8" height="0.8" fill="#8a8a8a" />
<rect x="425.425" y="85.2" width="0.8" height="0.8" fill="#8a8a8a" />
<rect x="429.6" y="84" width="0.8" height="3.2" fill="#9a9a9a" />
<rect x="433.77500000000003" y="85.2" width="0.8" height="0.8" fill="#8a8a8a" />
<rect x="437.95000000000005" y="85.2" width="0.8" height="0.8" fill="#8a8a8a" />
<rect x="442.12500000000006" y="85.2" width="0.8" height="0.8" fill="#8a8a8a" />
<text x="445.20" y="88.20" font-size="6.67" fill="#e8e8e8" stroke="#e8e8e8" stroke-width="0.3" textLength="3.10" lengthAdjust="spacingAndGlyphs">1</text>
<rect x="450.475" y="85.2" width="0.8" height="0.8" fill="#8a8a8a" />
<rect x="454.65000000000003" y="85.2" width="0.8" height="0.8" fill="#8a8a8a" />
<rect x="458.82500000000005" y="85.2" width="0.8" height="0.8" fill="#8a8a8a" />
<rect x="463.0" y="84" width="0.8" height="3.2" fill="#9a9a9a" />
<rect x="467.175" y="85.2" width="0.8" height="0.8" fill="#8a8a8a" />
<rect x="471.35" y="85.2" width="0.8" height="0.8" fill="#8a8a8a" />
<rect x="475.52500000000003" y="85.2" width="0.8" height="0.8" fill="#8a8a8a" />
<text x="478.60" y="88.20" font-size="6.67" fill="#e8e8e8" stroke="#e8e8e8" stroke-width="0.3" textLength="3.10" lengthAdjust="spacingAndGlyphs">2</text>
<rect x="483.875" y="85.2" width="0.8" height="0.8" fill="#8a8a8a" />
<rect x="488.05" y="85.2" width="0.8" height="0.8" fill="#8a8a8a" />
<rect x="492.225" y="85.2" width="0.8" height="0.8" fill="#8a8a8a" />
<rect x="496.40000000000003" y="84" width="0.8" height="3.2" fill="#9a9a9a" />
<rect x="500.57500000000005" y="85.2" width="0.8" height="0.8" fill="#8a8a8a" />
<rect x="504.75" y="85.2" width="0.8" height="0.8" fill="#8a8a8a" />
<rect x="508.925" y="85.2" width="0.8" height="0.8" fill="#8a8a8a" />
<text x="512.00" y="88.20" font-size="6.67" fill="#e8e8e8" stroke="#e8e8e8" stroke-width="0.3" textLength="3.10" lengthAdjust="spacingAndGlyphs">3</text>
<rect x="517.275" y="85.2" width="0.8" height="0.8" fill="#8a8a8a" />
<rect x="521.45" y="85.2" width="0.8" height="0.8" fill="#8a8a8a" />
<rect x="525.625" y="85.2" width="0.8" height="0.8" fill="#8a8a8a" />
<rect x="529.8000000000001" y="84" width="0.8" height="3.2" fill="#9a9a9a" />
<rect x="533.975" y="85.2" width="0.8" height="0.8" fill="#8a8a8a" />
<rect x="538.15" y="85.2" width="0.8" height="0.8" fill="#8a8a8a" />
<rect x="542.325" y="85.2" width="0.8" height="0.8" fill="#8a8a8a" />
<text x="545.40" y="88.20" font-size="6.67" fill="#e8e8e8" stroke="#e8e8e8" stroke-width="0.3" textLength="3.10" lengthAdjust="spacingAndGlyphs">4</text>
<rect x="550.6750000000001" y="85.2" width="0.8" height="0.8" fill="#8a8a8a" />
<rect x="554.85" y="85.2" width="0.8" height="0.8" fill="#8a8a8a" />
<rect x="559.025" y="85.2" width="0.8" height="0.8" fill="#8a8a8a" />
<rect x="563.2" y="84" width="0.8" height="3.2" fill="#9a9a9a" />
<rect x="567.375" y="85.2" width="0.8" height="0.8" fill="#8a8a8a" />
<rect x="571.5500000000001" y="85.2" width="0.8" height="0.8" fill="#8a8a8a" />
<rect x="575.725" y="85.2" width="0.8" height="0.8" fill="#8a8a8a" />
<text x="578.80" y="88.20" font-size="6.67" fill="#e8e8e8" stroke="#e8e8e8" stroke-width="0.3" textLength="3.10" lengthAdjust="spacingAndGlyphs">5</text>
<rect x="584.075" y="85.2" width="0.8" height="0.8" fill="#8a8a8a" />
<rect x="588.25" y="85.2" width="0.8" height="0.8" fill="#8a8a8a" />
<rect x="592.4250000000001" y="85.2" width="0.8" height="0.8" fill="#8a8a8a" />
<rect x="596.6" y="84" width="0.8" height="3.2" fill="#9a9a9a" />
<rect x="600.775" y="85.2" width="0.8" height="0.8" fill="#8a8a8a" />
<rect x="604.95" y="85.2" width="0.8" height="0.8" fill="#8a8a8a" />
<rect x="609.125" y="85.2" width="0.8" height="0.8" fill="#8a8a8a" />
<text x="612.20" y="88.20" font-size="6.67" fill="#e8e8e8" stroke="#e8e8e8" stroke-width="0.3" textLength="3.10" lengthAdjust="spacingAndGlyphs">6</text>
<rect x="617.475" y="85.2" width="0.8" height="0.8" fill="#8a8a8a" />
<rect x="621.65" y="85.2" width="0.8" height="0.8" fill="#8a8a8a" />
<rect x="625.825" y="85.2" width="0.8" height="0.8" fill="#8a8a8a" />
<rect x="630.0" y="84" width="0.8" height="3.2" fill="#9a9a9a" />
<rect x="634.1750000000001" y="85.2" width="0.8" height="0.8" fill="#8a8a8a" />
<rect x="125.8" y="106.8375" width="2" height="0.8" fill="#7a7a7a" />
<rect x="125" y="111.60000000000001" width="3.5" height="0.9" fill="#9a9a9a" />
<rect x="125.8" y="116.4625" width="2" height="0.8" fill="#7a7a7a" />
<rect x="125.8" y="121.275" width="2" height="0.8" fill="#7a7a7a" />
<rect x="125.8" y="126.0875" width="2" height="0.8" fill="#7a7a7a" />
<g transform="translate(126.5,131.30) rotate(-90)"><text x="-1.9" y="2.1" font-size="6" fill="#f0f0f0" stroke="#f0f0f0" stroke-width="0.2" textLength="3.8" lengthAdjust="spacingAndGlyphs">3</text></g>
<rect x="125.8" y="135.7125" width="2" height="0.8" fill="#7a7a7a" />
<rect x="125.8" y="140.525" width="2" height="0.8" fill="#7a7a7a" />
<rect x="125.8" y="145.3375" width="2" height="0.8" fill="#7a7a7a" />
<rect x="125" y="150.10000000000002" width="3.5" height="0.9" fill="#9a9a9a" />
<rect x="125.8" y="154.9625" width="2" height="0.8" fill="#7a7a7a" />
<rect x="125.8" y="159.775" width="2" height="0.8" fill="#7a7a7a" />
<rect x="125.8" y="164.5875" width="2" height="0.8" fill="#7a7a7a" />
<g transform="translate(126.5,169.80) rotate(-90)"><text x="-1.9" y="2.1" font-size="6" fill="#f0f0f0" stroke="#f0f0f0" stroke-width="0.2" textLength="3.8" lengthAdjust="spacingAndGlyphs">2</text></g>
<rect x="125.8" y="174.2125" width="2" height="0.8" fill="#7a7a7a" />
<rect x="125.8" y="179.025" width="2" height="0.8" fill="#7a7a7a" />
<rect x="125.8" y="183.8375" width="2" height="0.8" fill="#7a7a7a" />
<rect x="125" y="188.60000000000002" width="3.5" height="0.9" fill="#9a9a9a" />
<rect x="125.8" y="193.4625" width="2" height="0.8" fill="#7a7a7a" />
<rect x="125.8" y="198.275" width="2" height="0.8" fill="#7a7a7a" />
<rect x="125.8" y="203.0875" width="2" height="0.8" fill="#7a7a7a" />
<g transform="translate(126.5,208.30) rotate(-90)"><text x="-1.9" y="2.1" font-size="6" fill="#f0f0f0" stroke="#f0f0f0" stroke-width="0.2" textLength="3.8" lengthAdjust="spacingAndGlyphs">1</text></g>
<rect x="125.8" y="212.7125" width="2" height="0.8" fill="#7a7a7a" />
<rect x="125.8" y="217.525" width="2" height="0.8" fill="#7a7a7a" />
<rect x="125.8" y="222.3375" width="2" height="0.8" fill="#7a7a7a" />
<rect x="125" y="227.10000000000002" width="3.5" height="0.9" fill="#9a9a9a" />
<rect x="125.8" y="231.9625" width="2" height="0.8" fill="#7a7a7a" />
<rect x="125.8" y="236.775" width="2" height="0.8" fill="#7a7a7a" />
<rect x="125.8" y="241.5875" width="2" height="0.8" fill="#7a7a7a" />
<g transform="translate(126.5,246.80) rotate(-90)"><text x="-1.9" y="2.1" font-size="6" fill="#f0f0f0" stroke="#f0f0f0" stroke-width="0.2" textLength="3.8" lengthAdjust="spacingAndGlyphs">0</text></g>
<rect x="125.8" y="251.2125" width="2" height="0.8" fill="#7a7a7a" />
<rect x="125.8" y="256.02500000000003" width="2" height="0.8" fill="#7a7a7a" />
<rect x="125.8" y="260.83750000000003" width="2" height="0.8" fill="#7a7a7a" />
<rect x="125" y="265.6" width="3.5" height="0.9" fill="#9a9a9a" />
<rect x="125.8" y="270.46250000000003" width="2" height="0.8" fill="#7a7a7a" />
<rect x="125.8" y="275.27500000000003" width="2" height="0.8" fill="#7a7a7a" />
<rect x="125.8" y="280.08750000000003" width="2" height="0.8" fill="#7a7a7a" />
<g transform="translate(126.5,285.30) rotate(-90)"><text x="-1.9" y="2.1" font-size="6" fill="#f0f0f0" stroke="#f0f0f0" stroke-width="0.2" textLength="3.8" lengthAdjust="spacingAndGlyphs">1</text></g>
<rect x="125.8" y="289.71250000000003" width="2" height="0.8" fill="#7a7a7a" />
<rect x="125.8" y="294.52500000000003" width="2" height="0.8" fill="#7a7a7a" />
<rect x="125.8" y="299.33750000000003" width="2" height="0.8" fill="#7a7a7a" />
<rect x="125" y="304.1" width="3.5" height="0.9" fill="#9a9a9a" />
<rect x="125.8" y="308.96250000000003" width="2" height="0.8" fill="#7a7a7a" />
<rect x="125.8" y="313.77500000000003" width="2" height="0.8" fill="#7a7a7a" />
<rect x="125.8" y="318.58750000000003" width="2" height="0.8" fill="#7a7a7a" />
<g transform="translate(126.5,323.80) rotate(-90)"><text x="-1.9" y="2.1" font-size="6" fill="#f0f0f0" stroke="#f0f0f0" stroke-width="0.2" textLength="3.8" lengthAdjust="spacingAndGlyphs">2</text></g>
<rect x="125.8" y="328.21250000000003" width="2" height="0.8" fill="#7a7a7a" />
<rect x="125.8" y="333.02500000000003" width="2" height="0.8" fill="#7a7a7a" />
<rect x="125.8" y="337.83750000000003" width="2" height="0.8" fill="#7a7a7a" />
<rect x="125" y="342.6" width="3.5" height="0.9" fill="#9a9a9a" />
<rect x="125.8" y="347.46250000000003" width="2" height="0.8" fill="#7a7a7a" />
<rect x="125.8" y="352.27500000000003" width="2" height="0.8" fill="#7a7a7a" />
<rect x="125.8" y="357.08750000000003" width="2" height="0.8" fill="#7a7a7a" />
<g transform="translate(126.5,362.30) rotate(-90)"><text x="-1.9" y="2.1" font-size="6" fill="#f0f0f0" stroke="#f0f0f0" stroke-width="0.2" textLength="3.8" lengthAdjust="spacingAndGlyphs">3</text></g>
<rect x="125.8" y="366.71250000000003" width="2" height="0.8" fill="#7a7a7a" />
<rect x="125.8" y="371.52500000000003" width="2" height="0.8" fill="#7a7a7a" />
<rect x="125.8" y="376.33750000000003" width="2" height="0.8" fill="#7a7a7a" />
<rect x="125" y="381.1" width="3.5" height="0.9" fill="#9a9a9a" />
<rect x="125.8" y="385.96250000000003" width="2" height="0.8" fill="#7a7a7a" />
<rect x="507.7" y="135.8" width="100.5" height="35.8" fill="#32312f" stroke="#3a3a3a" stroke-width="0.8"/>
<rect x="515.2" y="140.2" width="11" height="12.4" fill="none" stroke="#a8a8a8" stroke-width="0.9"/>
<path d="M526.2,145.2 L518.5,152.8" fill="none" stroke="#4a90e0" stroke-width="1.6" />
<path d="M516.3,154 L518.2,152.2" fill="none" stroke="#4a90e0" stroke-width="1.8" />
<path d="M528.50,146.00 L529.70,147.60 L530.90,146.00 Z" fill="#bdbdbd" stroke="#bdbdbd" stroke-width="0.7"/>
<text x="515.00" y="164.00" font-size="7.68" fill="#e0e0e0" stroke="#e0e0e0" stroke-width="0.3" textLength="12.00" lengthAdjust="spacingAndGlyphs">Style</text>
<path d="M538,143.5 L541.5,139.5 L545.5,143.5 L542,147.5 Z" fill="none" stroke="#b8b8b8" stroke-width="0.9" />
<path d="M545.2,144 Q546.5,146 545.8,147.5" fill="none" stroke="#b8b8b8" stroke-width="0.8" />
<rect x="536" y="150.5" width="12" height="3" fill="#9a9a9a" />
<path d="M549.50,146.00 L550.70,147.60 L551.90,146.00 Z" fill="#bdbdbd" stroke="#bdbdbd" stroke-width="0.7"/>
<text x="538.20" y="164.00" font-size="7.68" fill="#e0e0e0" stroke="#e0e0e0" stroke-width="0.3" textLength="7.50" lengthAdjust="spacingAndGlyphs">Fill</text>
<rect x="559.5" y="140.3" width="11.4" height="9.3" fill="none" stroke="#a8a8a8" stroke-width="0.9"/>
<path d="M570.5,141.5 L563,148.5" fill="none" stroke="#4a90e0" stroke-width="1.4" />
<rect x="559.2" y="150.5" width="12" height="3" fill="#4a78d0" />
<path d="M572.70,146.00 L573.90,147.60 L575.10,146.00 Z" fill="#bdbdbd" stroke="#bdbdbd" stroke-width="0.7"/>
<text x="554.70" y="164.00" font-size="7.68" fill="#e0e0e0" stroke="#e0e0e0" stroke-width="0.3" textLength="20.30" lengthAdjust="spacingAndGlyphs">Outline</text>
<rect x="578.4" y="139" width="0.8" height="30" fill="#3e3e3e" />
<path d="M587.3,141.5 H599 V149.5 H590.5 L588.5,151.5 V149.5 H587.3 Z" fill="none" stroke="#a8a8a8" stroke-width="0.9" />
<path d="M589.5,138.3 V143.3 M587,140.8 H592" fill="none" stroke="#3fb04a" stroke-width="1" />
<text x="587.00" y="160.20" font-size="6.96" fill="#e0e0e0" stroke="#e0e0e0" stroke-width="0.3" textLength="11.20" lengthAdjust="spacingAndGlyphs">New</text>
<text x="580.20" y="168.00" font-size="6.96" fill="#e0e0e0" stroke="#e0e0e0" stroke-width="0.3" textLength="24.80" lengthAdjust="spacingAndGlyphs">Comment</text>
<rect x="508" y="181" width="82.5" height="228" fill="#32312f" stroke="#3c3c3c" stroke-width="0.8"/>
<rect x="508.5" y="287.5" width="69.5" height="16.1" fill="#454545" />
<rect x="578" y="287.5" width="12" height="16.1" fill="#393939" />
<rect x="528" y="252.3" width="59" height="0.8" fill="#444444" />
<rect x="528" y="322.9" width="59" height="0.8" fill="#444444" />
<rect x="528" y="341" width="59" height="0.8" fill="#444444" />
<rect x="528" y="392.1" width="59" height="0.8" fill="#444444" />
<text x="528.00" y="193.50" font-size="7.97" fill="#e0e0e0" stroke="#e0e0e0" stroke-width="0.3" textLength="9.50" lengthAdjust="spacingAndGlyphs">Cut</text>
<text x="528.00" y="211.00" font-size="7.97" fill="#e0e0e0" stroke="#e0e0e0" stroke-width="0.3" textLength="15.50" lengthAdjust="spacingAndGlyphs">Copy</text>
<text x="528.00" y="227.30" font-size="7.97" fill="#e8e8e8" stroke="#e8e8e8" stroke-width="0.3" font-weight="bold" textLength="41.50" lengthAdjust="spacingAndGlyphs">Paste Options:</text>
<text x="528.00" y="265.30" font-size="7.97" fill="#e0e0e0" stroke="#e0e0e0" stroke-width="0.3" textLength="16.70" lengthAdjust="spacingAndGlyphs">Group</text>
<text x="528.00" y="281.50" font-size="7.97" fill="#e0e0e0" stroke="#e0e0e0" stroke-width="0.3" textLength="36.60" lengthAdjust="spacingAndGlyphs">Bring to Front</text>
<text x="528.00" y="298.40" font-size="7.97" fill="#e8e8e8" stroke="#e8e8e8" stroke-width="0.3" textLength="34.20" lengthAdjust="spacingAndGlyphs">Send to Back</text>
<text x="528.00" y="316.30" font-size="7.97" fill="#666666" stroke="#666666" stroke-width="0.3" textLength="10.70" lengthAdjust="spacingAndGlyphs">Link</text>
<text x="528.00" y="334.90" font-size="7.97" fill="#e0e0e0" stroke="#e0e0e0" stroke-width="0.3" textLength="43.90" lengthAdjust="spacingAndGlyphs">Save as Picture...</text>
<text x="528.00" y="353.50" font-size="7.97" fill="#e0e0e0" stroke="#e0e0e0" stroke-width="0.3" textLength="36.40" lengthAdjust="spacingAndGlyphs">Edit Alt Text...</text>
<text x="528.00" y="369.90" font-size="7.97" fill="#e0e0e0" stroke="#e0e0e0" stroke-width="0.3" textLength="50.30" lengthAdjust="spacingAndGlyphs">Size and Position...</text>
<text x="528.00" y="386.00" font-size="7.97" fill="#e0e0e0" stroke="#e0e0e0" stroke-width="0.3" textLength="43.40" lengthAdjust="spacingAndGlyphs">Format Object...</text>
<text x="528.00" y="404.20" font-size="7.97" fill="#e0e0e0" stroke="#e0e0e0" stroke-width="0.3" textLength="40.80" lengthAdjust="spacingAndGlyphs">New Comment</text>
<rect x="535.8" y="194.4" width="1.7" height="0.7" fill="#c8c8c8" />
<rect x="528.0" y="211.9" width="4.8" height="0.7" fill="#c8c8c8" />
<rect x="528.0" y="266.2" width="4.67" height="0.7" fill="#c8c8c8" />
<rect x="554.19" y="282.4" width="2.01" height="0.7" fill="#c8c8c8" />
<rect x="559.33" y="299.29999999999995" width="2.87" height="0.7" fill="#c8c8c8" />
<rect x="528.0" y="335.79999999999995" width="3.74" height="0.7" fill="#c8c8c8" />
<rect x="540.06" y="354.4" width="4.02" height="0.7" fill="#c8c8c8" />
<rect x="533.23" y="370.79999999999995" width="2.94" height="0.7" fill="#c8c8c8" />
<rect x="531.7" y="386.9" width="3.37" height="0.7" fill="#c8c8c8" />
<rect x="549.94" y="405.09999999999997" width="5.14" height="0.7" fill="#c8c8c8" />
<path d="M583,259.5 L585.8,262.3 L583,265.1" fill="none" stroke="#a8a8a8" stroke-width="0.9"/>
<path d="M583,276.0 L585.8,278.8 L583,281.6" fill="none" stroke="#a8a8a8" stroke-width="0.9"/>
<path d="M583,292.8 L585.8,295.6 L583,298.40000000000003" fill="none" stroke="#c0c0c0" stroke-width="0.9"/>
<path d="M583,311.2 L585.8,314 L583,316.8" fill="none" stroke="#5a5a5a" stroke-width="0.9"/>
<path d="M517,185.5 L521.5,191 M521.8,185.5 L517.3,191" fill="none" stroke="#b8b8b8" stroke-width="0.9" />
<circle cx="517.6" cy="192.4" r="1.4" fill="#4b7fbf"/>
<circle cx="521.2" cy="192.4" r="1.4" fill="#4b7fbf"/>
<path d="M515.5,203.2 H519 V212 H515.5 Z" fill="none" stroke="#a8a8a8" stroke-width="0.9" />
<path d="M518.5,205 H522 L523.8,207 V212.2 H518.5 Z" fill="#32312f" stroke="#a8a8a8" stroke-width="0.9" />
<path d="M516.2,221 H522 V229 H516.2 Z" fill="none" stroke="#d6a45a" stroke-width="0.9" />
<rect x="517.8" y="219.2" width="2.6" height="2.2" fill="#32312f" stroke="#a8a8a8" stroke-width="0.7"/>
<rect x="519" y="223.5" width="3.5" height="5.5" fill="#32312f" stroke="#a8a8a8" stroke-width="0.7"/>
<path d="M529.3,238.5 H537.8 V248.5 H529.3 Z" fill="none" stroke="#d6a45a" stroke-width="0.9" />
<rect x="531.8" y="236.5" width="3.6" height="2.5" fill="#32312f" stroke="#a8a8a8" stroke-width="0.7"/>
<text x="533.80" y="248.50" font-size="4.78" fill="#c8c8c8" stroke="#c8c8c8" stroke-width="0.3" textLength="4.50" lengthAdjust="spacingAndGlyphs">a</text>
<path d="M544.7,238.5 H553.2 V248.5 H544.7 Z" fill="none" stroke="#d6a45a" stroke-width="0.9" />
<rect x="547.2" y="236.5" width="3.6" height="2.5" fill="#32312f" stroke="#a8a8a8" stroke-width="0.7"/>
<path d="M554.2,239 L547.7,248" fill="none" stroke="#4a90e0" stroke-width="1.6" />
<path d="M559.7,238.5 H568.2 V248.5 H559.7 Z" fill="none" stroke="#d6a45a" stroke-width="0.9" />
<rect x="562.2" y="236.5" width="3.6" height="2.5" fill="#32312f" stroke="#a8a8a8" stroke-width="0.7"/>
<rect x="563.2" y="242.5" width="6" height="5.5" fill="#3a6aa8" stroke="#6fa0d8" stroke-width="0.6"/>
<path d="M574.9,238.5 H583.4 V248.5 H574.9 Z" fill="none" stroke="#d6a45a" stroke-width="0.9" />
<rect x="577.4" y="236.5" width="3.6" height="2.5" fill="#32312f" stroke="#a8a8a8" stroke-width="0.7"/>
<text x="579.90" y="248.50" font-size="6.52" fill="#c8c8c8" stroke="#c8c8c8" stroke-width="0.3" textLength="5.00" lengthAdjust="spacingAndGlyphs">A</text>
<rect x="515" y="257.8" width="8" height="8.3" fill="none" stroke="#a8a8a8" stroke-width="0.8" stroke-dasharray="1.5,1"/>
<rect x="517.5" y="259.5" width="4" height="4" fill="none" stroke="#c8c8c8" stroke-width="0.8"/>
<rect x="515" y="274.5" width="5" height="5" fill="none" stroke="#8a8a8a" stroke-width="0.8"/>
<rect x="516.5" y="276" width="6" height="6" fill="#eba23a" />
<rect x="519.5" y="279" width="4" height="4" fill="none" stroke="#6a8ab0" stroke-width="0.8"/>
<rect x="515" y="291.2" width="5" height="5" fill="none" stroke="#a8a8a8" stroke-width="0.8"/>
<rect x="516.5" y="293" width="5.5" height="5.5" fill="#d8a040" />
<rect x="518.5" y="296" width="5" height="5" fill="#454545" stroke="#a8a8a8" stroke-width="0.8"/>
<path d="M516,313 Q514,311 516.5,310.5 L519,310.5 Q521,311.5 519.5,313.5 M518.5,313.5 Q517,315.5 519.5,316.5 H522 Q524,315.5 522,313.5" fill="none" stroke="#5a5a5a" stroke-width="0.9" />
<rect x="515.3" y="347.3" width="8" height="7.2" fill="none" stroke="#a8a8a8" stroke-width="0.8"/>
<path d="M516.5,353 L519,350 L521,352" fill="none" stroke="#a8a8a8" stroke-width="0.7" />
<rect x="519.5" y="352" width="4.5" height="3" fill="#4b7fbf" />
<path d="M516,363.5 V372 M523,363.5 V372 M518.5,364 V371.5 M520.5,364 V371.5" fill="none" stroke="#a8a8a8" stroke-width="0.8" />
<rect x="515" y="365" width="2" height="5" fill="#4b7fbf" />
<path d="M516,382 L519.5,378.8 L523,382 L519.5,385.5 Z" fill="none" stroke="#b8b8b8" stroke-width="0.9" />
<path d="M516,385 L521,389" fill="none" stroke="#4a90e0" stroke-width="1.5" />
<path d="M515.3,397.5 H523.5 V403.5 H518 L516.3,405.5 V403.5 H515.3 Z" fill="none" stroke="#a8a8a8" stroke-width="0.9" />
<line x1="183.50" y1="111.80" x2="223.97" y2="153.64" stroke="#ea1010" stroke-width="3.3" stroke-linecap="round"/>
<path d="M233.70,163.70 L217.69,156.93 L227.46,147.47 Z" fill="#ea1010"/>
<line x1="658.70" y1="350.30" x2="582.88" y2="307.74" stroke="#ea1010" stroke-width="3.4" stroke-linecap="round"/>
<path d="M569.80,300.40 L588.44,301.92 L580.81,315.52 Z" fill="#ea1010"/>
<line x1="472.50" y1="4.00" x2="436.03" y2="22.99" stroke="#ea1010" stroke-width="3.2" stroke-linecap="round"/>
<path d="M424.50,29.00 L434.80,16.31 L440.81,27.84 Z" fill="#ea1010"/>
<line x1="76.30" y1="50.20" x2="56.09" y2="29.27" stroke="#ea1010" stroke-width="4" stroke-linecap="round"/>
<path d="M48.10,21.00 L62.15,26.20 L52.80,35.23 Z" fill="#ea1010"/>
</svg></body></html>
